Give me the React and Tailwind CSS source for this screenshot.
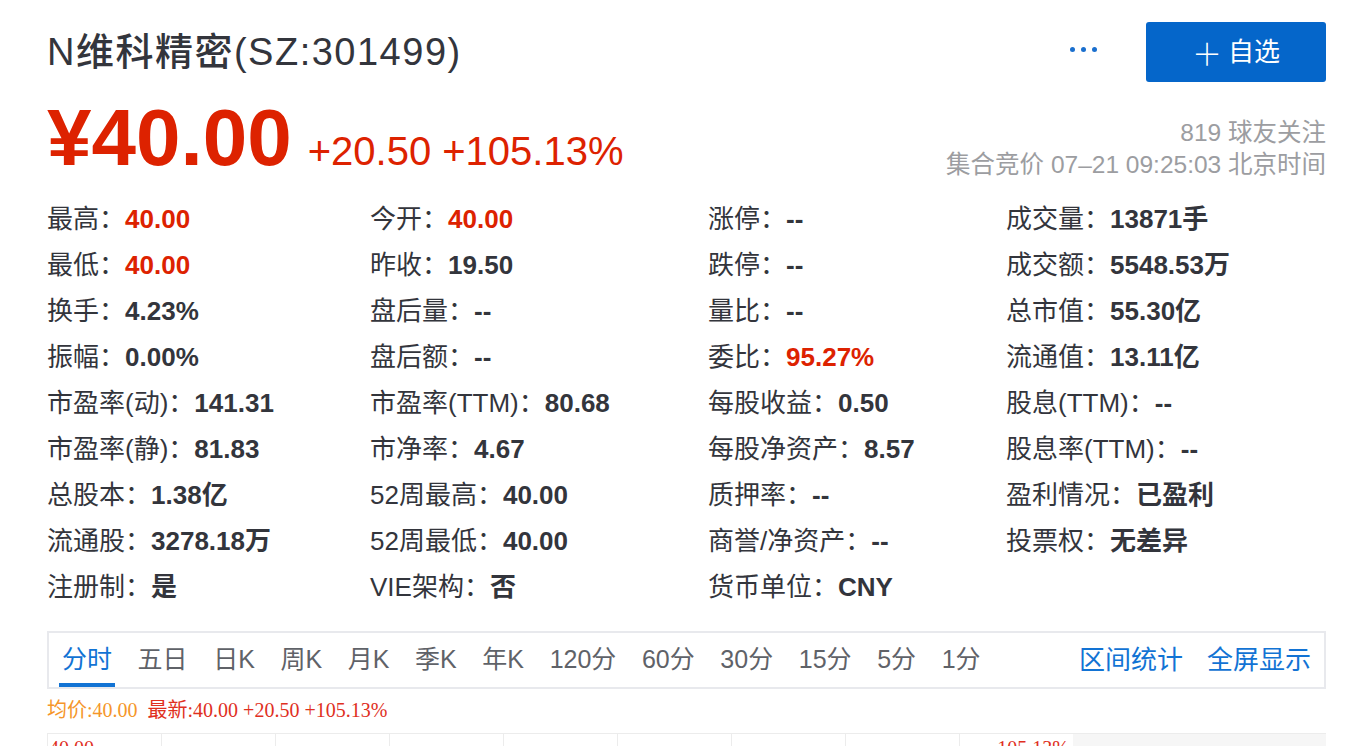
import React from "react";

const red = "text-[#dd2200]";

const stats = [
  ["最高", "40.00", true], ["今开", "40.00", true], ["涨停", "--"], ["成交量", "13871手"],
  ["最低", "40.00", true], ["昨收", "19.50"], ["跌停", "--"], ["成交额", "5548.53万"],
  ["换手", "4.23%"], ["盘后量", "--"], ["量比", "--"], ["总市值", "55.30亿"],
  ["振幅", "0.00%"], ["盘后额", "--"], ["委比", "95.27%", true], ["流通值", "13.11亿"],
  ["市盈率(动)", "141.31"], ["市盈率(TTM)", "80.68"], ["每股收益", "0.50"], ["股息(TTM)", "--"],
  ["市盈率(静)", "81.83"], ["市净率", "4.67"], ["每股净资产", "8.57"], ["股息率(TTM)", "--"],
  ["总股本", "1.38亿"], ["52周最高", "40.00"], ["质押率", "--"], ["盈利情况", "已盈利"],
  ["流通股", "3278.18万"], ["52周最低", "40.00"], ["商誉/净资产", "--"], ["投票权", "无差异"],
  ["注册制", "是"], ["VIE架构", "否"], ["货币单位", "CNY"],
];

const tabs = ["分时", "五日", "日K", "周K", "月K", "季K", "年K", "120分", "60分", "30分", "15分", "5分", "1分"];

export default function App() {
  return (
    <div className="h-[746px] overflow-hidden bg-white pl-[47px] pr-[40px] pt-[22px] text-[#33353c] font-['Liberation_Sans','Noto_Sans_CJK_SC',sans-serif]">
      {/* header */}
      <div className="flex h-[60px] items-center justify-between">
        <h1 className="text-[38px] font-medium leading-none tracking-[1.5px]">N维科精密(SZ:301499)</h1>
        <div className="flex items-center">
          <div className="flex items-center gap-[6px] pb-[6px]">
            <span className="h-[5px] w-[5px] rounded-full bg-[#1a6fce]" />
            <span className="h-[5px] w-[5px] rounded-full bg-[#1a6fce]" />
            <span className="h-[5px] w-[5px] rounded-full bg-[#1a6fce]" />
          </div>
          <button className="ml-[49px] flex h-[60px] w-[180px] items-center justify-center gap-[6px] rounded-[3px] bg-[#0566ca] text-[26px] text-white">
            <span className="text-[30px] leading-none font-['Noto_Sans_CJK_SC',sans-serif] font-light">＋</span>
            <span>自选</span>
          </button>
        </div>
      </div>

      {/* price */}
      <div className="mt-[16px] flex items-end justify-between">
        <div className="flex items-baseline">
          <span className={`text-[80px] font-bold leading-[80px] ${red}`}>¥40.00</span>
          <span className={`ml-[16px] text-[40px] leading-none ${red}`}>+20.50 +105.13%</span>
        </div>
        <div className="mb-[-3px] text-right text-[24.5px] leading-[32px] text-[#9c9da1]">
          <div>819 球友关注</div>
          <div>集合竞价 07–21 09:25:03 北京时间</div>
        </div>
      </div>

      {/* stats grid */}
      <div className="mt-[18px] grid grid-cols-[323px_338px_298px_1fr] text-[26px] leading-[46px]">
        {stats.map(([label, value, hot], i) => (
          <div key={i} className="whitespace-nowrap">
            <span>{label}：</span>
            <span className={`font-bold ${hot ? red : ""}`}>{value}</span>
          </div>
        ))}
      </div>

      {/* tabs */}
      <div className="mt-[21px] flex h-[58px] items-stretch justify-between border-2 border-[#e8e9ed] text-[25px]">
        <div className="flex items-stretch gap-[25.6px] pl-[13px]">
          {tabs.map((t, i) => (
            <div
              key={t}
              className={`relative flex items-center ${i === 0 ? "text-[#1273d4]" : "text-[#5f6268]"}`}
            >
              {t}
              {i === 0 && <span className="absolute -left-[3px] -right-[3px] bottom-0 h-[4px] bg-[#1273d4]" />}
            </div>
          ))}
        </div>
        <div className="flex items-center gap-[24px] pr-[13px] text-[26px] text-[#1273d4]">
          <span>区间统计</span>
          <span>全屏显示</span>
        </div>
      </div>

      {/* chart legend */}
      <div className="mt-[9px] text-[20px] leading-[24px] font-['Liberation_Serif','Noto_Sans_CJK_SC',serif]">
        <span className="text-[#f5962a]">均价:40.00</span>
        <span className="ml-[10px] text-[#e0301e]">最新:40.00 +20.50 +105.13%</span>
      </div>

      {/* chart */}
      <div className="mt-[11px] flex h-[200px] border-t border-[#ececec]">
        <div className="relative grid w-[1026px] grid-cols-9">
          {Array.from({ length: 9 }).map((_, i) => (
            <div key={i} className="border-l border-[#ececec]" />
          ))}
          <span className="absolute left-[2px] top-[4px] text-[20px] leading-none text-[#e0301e] font-['Liberation_Serif',serif]">40.00</span>
          <span className="absolute right-[4px] top-[4px] text-[20px] leading-none text-[#e0301e] font-['Liberation_Serif',serif]">105.13%</span>
        </div>
        <div className="flex flex-1 justify-center bg-[#f6f6f6] pt-[12px] text-[22px] text-[#33353c]">
          分时成交
        </div>
      </div>
    </div>
  );
}
